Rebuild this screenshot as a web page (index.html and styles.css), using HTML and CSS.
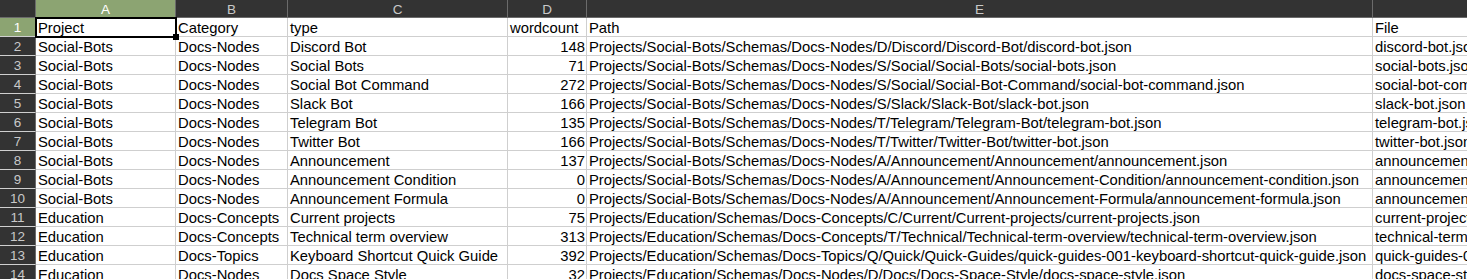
FILE: index.html
```html
<!DOCTYPE html>
<html>
    <head>
        <title>docs list</title>
        <meta charset="UTF-8">
        <link rel="stylesheet" href="styles.css">
    </head>
    <body>
        <div class="sheet">
            <div class="corner"></div>
            <div class="col-head active">A</div>
            <div class="col-head">B</div>
            <div class="col-head">C</div>
            <div class="col-head">D</div>
            <div class="col-head">E</div>
            <div class="col-head">F</div>

            <div class="row-head active">1</div>
            <div class="cell selected">Project</div>
            <div class="cell">Category</div>
            <div class="cell">type</div>
            <div class="cell">wordcount</div>
            <div class="cell">Path</div>
            <div class="cell">File</div>

            <div class="row-head">2</div>
            <div class="cell">Social-Bots</div>
            <div class="cell">Docs-Nodes</div>
            <div class="cell">Discord Bot</div>
            <div class="cell num">148</div>
            <div class="cell">Projects/Social-Bots/Schemas/Docs-Nodes/D/Discord/Discord-Bot/discord-bot.json</div>
            <div class="cell">discord-bot.json</div>

            <div class="row-head">3</div>
            <div class="cell">Social-Bots</div>
            <div class="cell">Docs-Nodes</div>
            <div class="cell">Social Bots</div>
            <div class="cell num">71</div>
            <div class="cell">Projects/Social-Bots/Schemas/Docs-Nodes/S/Social/Social-Bots/social-bots.json</div>
            <div class="cell">social-bots.json</div>

            <div class="row-head">4</div>
            <div class="cell">Social-Bots</div>
            <div class="cell">Docs-Nodes</div>
            <div class="cell">Social Bot Command</div>
            <div class="cell num">272</div>
            <div class="cell">Projects/Social-Bots/Schemas/Docs-Nodes/S/Social/Social-Bot-Command/social-bot-command.json</div>
            <div class="cell">social-bot-command.json</div>

            <div class="row-head">5</div>
            <div class="cell">Social-Bots</div>
            <div class="cell">Docs-Nodes</div>
            <div class="cell">Slack Bot</div>
            <div class="cell num">166</div>
            <div class="cell">Projects/Social-Bots/Schemas/Docs-Nodes/S/Slack/Slack-Bot/slack-bot.json</div>
            <div class="cell">slack-bot.json</div>

            <div class="row-head">6</div>
            <div class="cell">Social-Bots</div>
            <div class="cell">Docs-Nodes</div>
            <div class="cell">Telegram Bot</div>
            <div class="cell num">135</div>
            <div class="cell">Projects/Social-Bots/Schemas/Docs-Nodes/T/Telegram/Telegram-Bot/telegram-bot.json</div>
            <div class="cell">telegram-bot.json</div>

            <div class="row-head">7</div>
            <div class="cell">Social-Bots</div>
            <div class="cell">Docs-Nodes</div>
            <div class="cell">Twitter Bot</div>
            <div class="cell num">166</div>
            <div class="cell">Projects/Social-Bots/Schemas/Docs-Nodes/T/Twitter/Twitter-Bot/twitter-bot.json</div>
            <div class="cell">twitter-bot.json</div>

            <div class="row-head">8</div>
            <div class="cell">Social-Bots</div>
            <div class="cell">Docs-Nodes</div>
            <div class="cell">Announcement</div>
            <div class="cell num">137</div>
            <div class="cell">Projects/Social-Bots/Schemas/Docs-Nodes/A/Announcement/Announcement/announcement.json</div>
            <div class="cell">announcement.json</div>

            <div class="row-head">9</div>
            <div class="cell">Social-Bots</div>
            <div class="cell">Docs-Nodes</div>
            <div class="cell">Announcement Condition</div>
            <div class="cell num">0</div>
            <div class="cell">Projects/Social-Bots/Schemas/Docs-Nodes/A/Announcement/Announcement-Condition/announcement-condition.json</div>
            <div class="cell">announcement-condition.json</div>

            <div class="row-head">10</div>
            <div class="cell">Social-Bots</div>
            <div class="cell">Docs-Nodes</div>
            <div class="cell">Announcement Formula</div>
            <div class="cell num">0</div>
            <div class="cell">Projects/Social-Bots/Schemas/Docs-Nodes/A/Announcement/Announcement-Formula/announcement-formula.json</div>
            <div class="cell">announcement-formula.json</div>

            <div class="row-head">11</div>
            <div class="cell">Education</div>
            <div class="cell">Docs-Concepts</div>
            <div class="cell">Current projects</div>
            <div class="cell num">75</div>
            <div class="cell">Projects/Education/Schemas/Docs-Concepts/C/Current/Current-projects/current-projects.json</div>
            <div class="cell">current-projects.json</div>

            <div class="row-head">12</div>
            <div class="cell">Education</div>
            <div class="cell">Docs-Concepts</div>
            <div class="cell">Technical term overview</div>
            <div class="cell num">313</div>
            <div class="cell">Projects/Education/Schemas/Docs-Concepts/T/Technical/Technical-term-overview/technical-term-overview.json</div>
            <div class="cell">technical-term-overview.json</div>

            <div class="row-head">13</div>
            <div class="cell">Education</div>
            <div class="cell">Docs-Topics</div>
            <div class="cell">Keyboard Shortcut Quick Guide</div>
            <div class="cell num">392</div>
            <div class="cell">Projects/Education/Schemas/Docs-Topics/Q/Quick/Quick-Guides/quick-guides-001-keyboard-shortcut-quick-guide.json</div>
            <div class="cell">quick-guides-001-keyboard-shortcut-quick-guide.json</div>

            <div class="row-head">14</div>
            <div class="cell">Education</div>
            <div class="cell">Docs-Nodes</div>
            <div class="cell">Docs Space Style</div>
            <div class="cell num">32</div>
            <div class="cell">Projects/Education/Schemas/Docs-Nodes/D/Docs/Docs-Space-Style/docs-space-style.json</div>
            <div class="cell">docs-space-style.json</div>
        </div>
    </body>
</html>
```

FILE: styles.css
```css
* {box-sizing: border-box;}

body {
    margin: 0;
    overflow: hidden;
    background: white;
    font-family: "Liberation Sans", Arial, sans-serif;
}

/* the whole grid, wider than the window on purpose */
.sheet {
    display: grid;
    grid-template-columns: 36px 140px 112px 220px 79px 786px 400px;
    grid-template-rows: 18px;
    grid-auto-rows: 19px;
    width: max-content;
}

.corner {
    background-color: #333333;
    border-right: 1px solid #6b6b6b;
    border-bottom: 1px solid #6b6b6b;
}

.col-head {
    background-color: #333333;
    color: #c9c9c9;
    font-size: 13.5px;
    text-align: center;
    line-height: 18px;
    padding-top: 1px;
    border-right: 1px solid #6b6b6b;
    border-bottom: 1px solid #6b6b6b;
}

.row-head {
    background-color: #333333;
    color: #c9c9c9;
    font-size: 13.5px;
    text-align: center;
    line-height: 19px;
    border-right: 1px solid #6b6b6b;
    border-bottom: 1px solid #cfcfcf;
}

.col-head.active, .row-head.active {
    background-color: #8ca472;
    color: #ffffff;
}

.cell {
    color: #000;
    font-size: 14.8px;
    padding: 1px 2px 0 2px;
    line-height: 18px;
    white-space: nowrap;
    overflow: hidden;
    border-right: 1px solid #cfcfcf;
    border-bottom: 1px solid #cfcfcf;
}

.num {
    text-align: right;
    padding-right: 1px;
}

/* cursor box around A1 with the little fill handle */
.selected {
    position: relative;
    overflow: visible;
    outline: 2px solid #000;
    outline-offset: -1px;
    z-index: 2;
}

.selected::after {
    content: "";
    position: absolute;
    right: -4px;
    bottom: -4px;
    width: 6px;
    height: 6px;
    background: #000;
}
```
